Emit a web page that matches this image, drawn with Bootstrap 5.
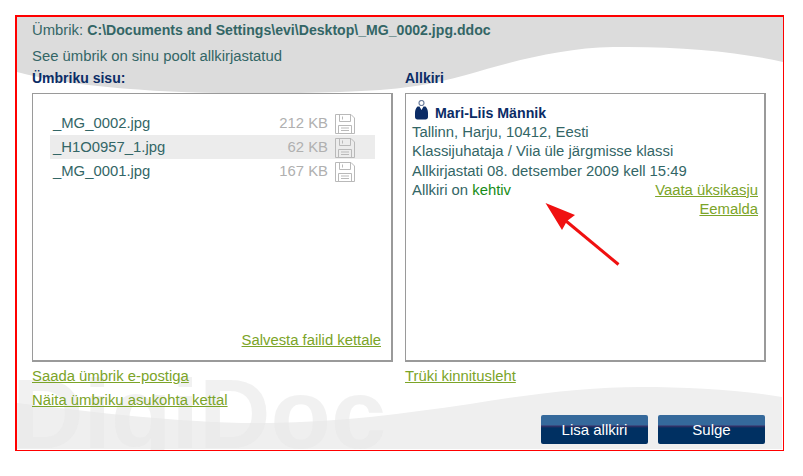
<!DOCTYPE html>
<html lang="et">
<head>
<meta charset="utf-8">
<title>DigiDoc</title>
<link href="https://cdn.jsdelivr.net/npm/bootstrap@5.3.0/dist/css/bootstrap.min.css" rel="stylesheet">
<style>
body{background:#fff;font-family:"Liberation Sans",Arial,sans-serif;font-size:14.85px;color:#336666;line-height:19.25px;margin:0}
.dd-frame{position:relative;width:769px;height:436px;margin:15px 0 0 15px;border:1px solid #f00;border-top-width:2px;border-left-width:2px;overflow:hidden;background:#fff}
.dd-bg{position:absolute;left:0;top:0;width:767px;height:434px}
.dd-content{position:relative;padding:1px 16px 0 15px;height:100%}
.dd-line1{height:25px;line-height:24px}
.dd-line1 b{font-size:14.1px}
.dd-line2{height:25px;line-height:23px;margin-top:2px}
.dd-cols{display:flex;gap:12px}
.dd-col{width:361px}
.dd-head{color:#0b2c66;font-weight:700;font-size:14px;height:23px;line-height:17px}
.dd-box{height:269px;border:2px solid #9a9a9a;border-width:1px 2px 2px 1px;background:#fff;position:relative;display:flex;flex-direction:column}
.dd-files{padding:17px 0 0 17px;width:342px}
.dd-file{display:flex;align-items:center;height:24px;padding:2px 20px 0 3px}
.dd-file.dd-on{background:#ececec}
.dd-name{flex:1}
.dd-size{color:#b0b0b0;margin-right:7px}
.dd-link{color:#7ba428;text-decoration:underline}
.dd-foot{margin-top:auto;text-align:right;padding:0 10px 10px 0}
.dd-sign{padding:9px 6px 0 6px}
.dd-who{display:flex;align-items:center;gap:7px;height:20px;color:#0b2c66;font-weight:700;font-size:14.2px;padding-top:1px}
.dd-who svg{margin:-8px 0 0 3px}
.dd-ok{color:#168c16}
.dd-status{display:flex;justify-content:space-between}
.dd-links{margin-top:2px;height:48px;line-height:24px}
.dd-links a{display:block;width:max-content}
.dd-btns{position:absolute;right:18px;top:398px;display:flex;gap:10px}
.dd-btn{width:107px;height:29px;padding:0;border:0;border-radius:2px;color:#fff;font-size:15px;line-height:27px;background:linear-gradient(#35699b 0,#35699b 10px,#3a2f66 11px,#003062 13px,#003062 100%)}
.dd-arrow{position:absolute;left:0;top:0;width:767px;height:434px;pointer-events:none}
.dd-wm{font-family:"Liberation Sans",Arial,sans-serif;font-weight:700;font-size:99px;fill:#e8e8e8;fill-opacity:.6}
</style>
</head>
<body>
<div class="dd-frame">
  <svg class="dd-bg" viewBox="17 17 767 434" aria-hidden="true">
    <path fill="#dcdcdc" d="M17 17H783V62C740 52 680 46 613 47C560 48 510 62 466 75C430 85 400 90 340 92C220 96 90 92 17 72Z"/>
    <path fill="#efefef" d="M17 403C100 413 190 424 270 423C340 422 400 414 470 404C530 394 590 387 640 387C690 387 740 390 782 397V449H17Z"/>
    <text class="dd-wm" x="12" y="448">DigiDoc</text>
  </svg>
  <div class="dd-content">
    <div class="dd-line1">Ümbrik: <b>C:\Documents and Settings\evi\Desktop\_MG_0002.jpg.ddoc</b></div>
    <div class="dd-line2">See ümbrik on sinu poolt allkirjastatud</div>
    <div class="dd-cols">
      <div class="dd-col">
        <div class="dd-head">Ümbriku sisu:</div>
        <div class="dd-box">
          <div class="dd-files">
            <div class="dd-file"><span class="dd-name">_MG_0002.jpg</span><span class="dd-size">212 KB</span>
              <svg width="20" height="20" viewBox="0 0 20 20" fill="none" stroke="#b9b9b9"><path d="M.5.5H16L19.5 4V19.5H.5Z"/><path d="M4.5.5V7.5H15.5V.5"/><path d="M3.5 19.5V11.5H16.5V19.5M6 14H14M6 16.5H14"/><path d="M7.5 2.5V5.5"/></svg></div>
            <div class="dd-file dd-on"><span class="dd-name">_H1O0957_1.jpg</span><span class="dd-size">62 KB</span>
              <svg width="20" height="20" viewBox="0 0 20 20" fill="none" stroke="#b9b9b9"><path d="M.5.5H16L19.5 4V19.5H.5Z"/><path d="M4.5.5V7.5H15.5V.5"/><path d="M3.5 19.5V11.5H16.5V19.5M6 14H14M6 16.5H14"/><path d="M7.5 2.5V5.5"/></svg></div>
            <div class="dd-file"><span class="dd-name">_MG_0001.jpg</span><span class="dd-size">167 KB</span>
              <svg width="20" height="20" viewBox="0 0 20 20" fill="none" stroke="#b9b9b9"><path d="M.5.5H16L19.5 4V19.5H.5Z"/><path d="M4.5.5V7.5H15.5V.5"/><path d="M3.5 19.5V11.5H16.5V19.5M6 14H14M6 16.5H14"/><path d="M7.5 2.5V5.5"/></svg></div>
          </div>
          <div class="dd-foot"><a class="dd-link" href="#">Salvesta failid kettale</a></div>
        </div>
        <div class="dd-links">
          <a class="dd-link" href="#">Saada ümbrik e-postiga</a>
          <a class="dd-link" href="#">Näita ümbriku asukohta kettal</a>
        </div>
      </div>
      <div class="dd-col">
        <div class="dd-head">Allkiri</div>
        <div class="dd-box">
          <div class="dd-sign">
            <div class="dd-who">
              <svg width="13" height="20" viewBox="0 0 13 20"><circle cx="6.500" cy="3" r="2.500" fill="none" stroke="#6d7f9e" stroke-width="1.200"/><path fill="#0b2c66" d="M2.500 6.500H4.500L6.500 10L8.500 6.500H10.500C12 8 13 10 13 13V17C13 18.500 12 19.500 10.500 19.500H2.500C1 19.500 0 18.500 0 17V13C0 10 1 8 2.500 6.500Z"/></svg>
              <span>Mari-Liis Männik</span>
            </div>
            <div>Tallinn, Harju, 10412, Eesti</div>
            <div>Klassijuhataja / Viia üle järgmisse klassi</div>
            <div>Allkirjastati 08. detsember 2009 kell 15:49</div>
            <div class="dd-status"><span>Allkiri on <span class="dd-ok">kehtiv</span></span><a class="dd-link" href="#">Vaata üksikasju</a></div>
            <div class="text-end"><a class="dd-link" href="#">Eemalda</a></div>
          </div>
        </div>
        <div class="dd-links">
          <a class="dd-link" href="#">Trüki kinnitusleht</a>
        </div>
      </div>
    </div>
    <div class="dd-btns">
      <button type="button" class="btn dd-btn">Lisa allkiri</button>
      <button type="button" class="btn dd-btn">Sulge</button>
    </div>
  </div>
  <svg class="dd-arrow" viewBox="17 17 767 434" aria-hidden="true">
    <path d="M618.500 264.500L566 221" stroke="#f01010" stroke-width="3" fill="none"/>
    <path fill="#f01010" d="M545.500 203L575 215L567 221L562 230Z"/>
  </svg>
</div>
<script src="https://cdn.jsdelivr.net/npm/bootstrap@5.3.0/dist/js/bootstrap.bundle.min.js"></script>
</body>
</html>
